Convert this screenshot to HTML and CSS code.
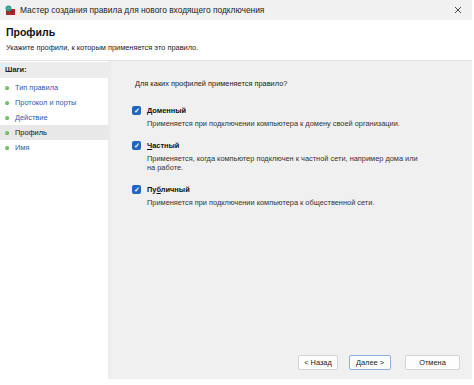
FILE: index.html
```html
<!DOCTYPE html>
<html lang="ru">
<head>
  <meta charset="UTF-8">
  <title>Мастер создания правила для нового входящего подключения</title>
  <link rel="stylesheet" href="styles.css">
</head>
<body>
  <div class="window">
    <div class="titlebar">
      <svg class="app-icon" width="10" height="10" viewBox="0 0 10 10">
        <rect x="1" y="4" width="9" height="6" fill="#b3262b"/>
        <path d="M1 6.5h9M4 4v2.5M7 6.5v3.5" stroke="#7a1418" stroke-width="0.6"/>
        <circle cx="3.5" cy="3.5" r="3" fill="#2f9a8a"/>
        <path d="M1.5 3.5a2 1 0 0 1 4 0" fill="#6cc3b2"/>
      </svg>
      <span class="title">Мастер создания правила для нового входящего подключения</span>
      <svg class="close" width="8" height="8" viewBox="0 0 8 8">
        <path d="M1 1l6 6M7 1l-6 6" stroke="#333" stroke-width="0.9"/>
      </svg>
    </div>

    <div class="header">
      <h1>Профиль</h1>
      <p>Укажите профили, к которым применяется это правило.</p>
    </div>

    <div class="body">
      <div class="sidebar">
        <div class="steps-title">Шаги:</div>
        <div class="step"><span class="dot"></span><a>Тип правила</a></div>
        <div class="step"><span class="dot"></span><a>Протокол и порты</a></div>
        <div class="step"><span class="dot"></span><a>Действие</a></div>
        <div class="step current"><span class="dot"></span><span>Профиль</span></div>
        <div class="step"><span class="dot"></span><a>Имя</a></div>
      </div>

      <div class="main">
        <div class="question">Для каких профилей применяется правило?</div>

        <div class="option first">
          <div class="check-row"><span class="checkbox">✓</span><b><u>Д</u>оменный</b></div>
          <div class="desc">Применяется при подключении компьютера к домену своей организации.</div>
        </div>
        <div class="option">
          <div class="check-row"><span class="checkbox">✓</span><b><u>Ч</u>астный</b></div>
          <div class="desc">Применяется, когда компьютер подключен к частной сети, например дома или<br>на работе.</div>
        </div>
        <div class="option">
          <div class="check-row"><span class="checkbox">✓</span><b>Пу<u>б</u>личный</b></div>
          <div class="desc">Применяется при подключении компьютера к общественной сети.</div>
        </div>

        <div class="buttons">
          <button class="btn back">&lt; Назад</button>
          <button class="btn next">Далее &gt;</button>
          <button class="btn cancel">Отмена</button>
        </div>
      </div>
    </div>
  </div>
</body>
</html>
```

FILE: styles.css
```css
body {
  margin: 0;
  background-color: #ffffff;
  font-family: 'Liberation Sans', Arial, sans-serif;
  color: #1e1e1e;
}
.window {
  width: 472px;
  height: 379px;
  display: flex;
  flex-direction: column;
  background-color: #ffffff;
}
.titlebar {
  height: 20px;
  background-color: #f1f1f1;
  display: flex;
  align-items: center;
  padding: 0 8px 0 5px;
}
.app-icon {
  margin-right: 5px;
}
.title {
  font-size: 8.4px;
  color: #222;
  flex-grow: 1;
}
.close {
  margin-right: 2px;
}
.header {
  height: 40px;
  padding: 5px 0 0 6px;
  box-sizing: border-box;
}
.header h1 {
  margin: 0;
  font-size: 10.5px;
  line-height: 14px;
  font-weight: bold;
  color: #111;
}
.header p {
  margin: 3px 0 0;
  font-size: 7.4px;
  line-height: 12px;
  color: #222;
}
.body {
  flex-grow: 1;
  display: flex;
  border-top: 1px solid #e4e4e4;
}
.sidebar {
  width: 108px;
  background-color: #ffffff;
  border-right: 3px solid #ececec;
  padding-top: 1px;
}
.steps-title {
  height: 16px;
  line-height: 16px;
  padding-left: 5px;
  font-size: 7.4px;
  font-weight: bold;
  background-color: #ececec;
  margin-bottom: 2px;
}
.step {
  height: 15px;
  display: flex;
  align-items: center;
  font-size: 7.4px;
}
.step a {
  color: #2a5db3;
}
.step.current {
  background-color: #e8e8e8;
  color: #111;
}
.dot {
  width: 4px;
  height: 4px;
  border-radius: 50%;
  background: radial-gradient(circle at 35% 35%, #8fd27a, #3a9a2a);
  margin: 0 6px 0 5px;
}
.main {
  flex-grow: 1;
  background-color: #f0f0f0;
  padding: 17px 12px 9px 24px;
  display: flex;
  flex-direction: column;
  font-size: 7.4px;
}
.question {
  line-height: 12px;
  color: #222;
}
.option {
  margin-top: 11px;
  margin-left: -3px;
}
.option.first {
  margin-top: 14px;
}
.check-row {
  height: 12px;
  display: flex;
  align-items: center;
  gap: 6px;
}
.check-row b {
  color: #111;
}
.checkbox {
  width: 9px;
  height: 9px;
  border-radius: 2px;
  background-color: #1f66c1;
  color: #fff;
  font-size: 7px;
  line-height: 9px;
  text-align: center;
  font-weight: bold;
}
.desc {
  margin-top: 3px;
  padding-left: 15px;
  line-height: 9px;
  color: #333;
}
.buttons {
  margin-top: auto;
  display: flex;
  justify-content: flex-end;
}
.btn {
  height: 15px;
  padding: 0;
  background-color: #fdfdfd;
  border: 1px solid #d4d4d4;
  border-radius: 2px;
  font-family: 'Liberation Sans', Arial, sans-serif;
  font-size: 7.4px;
  color: #222;
}
.back {
  width: 40px;
}
.next {
  width: 42px;
  margin-left: 11px;
  border-color: #8fb0de;
}
.cancel {
  width: 55px;
  margin-left: 14px;
}
```
